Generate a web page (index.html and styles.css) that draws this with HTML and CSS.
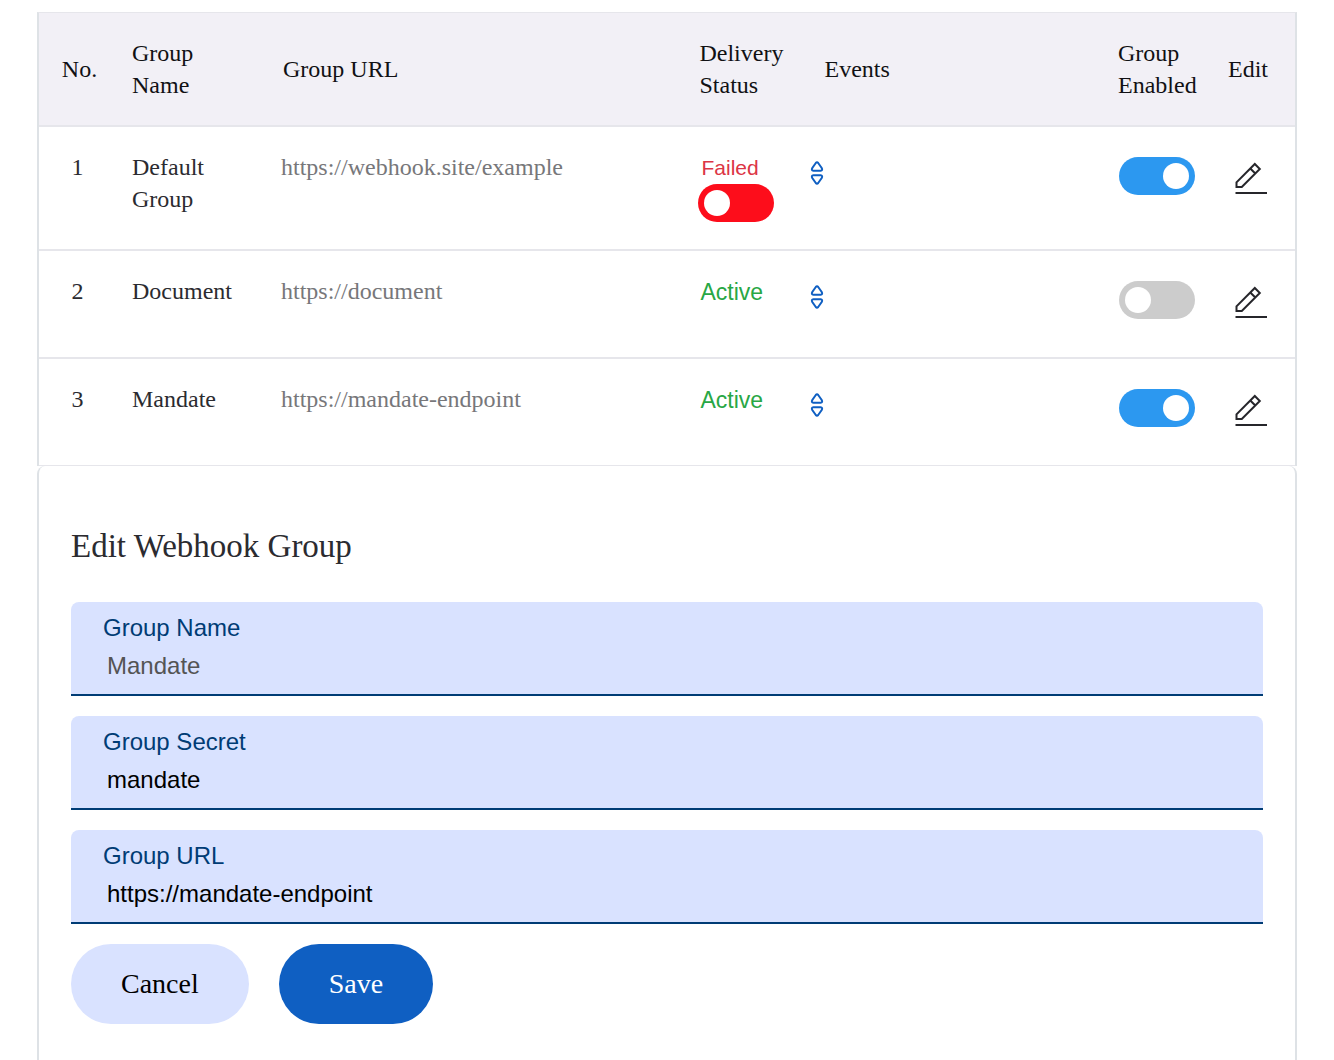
FILE: index.html
```html
<!DOCTYPE html>
<html lang="en">
<head>
  <meta charset="UTF-8" />
  <meta name="viewport" content="width=device-width, initial-scale=1.0"/>
  <title>Webhook Groups</title>
  <link rel="stylesheet" href="styles.css">
</head>
<body>
  <!-- Shared icons -->
  <svg class="sprite" aria-hidden="true">
    <symbol id="icon-sort" viewBox="0 0 14 26">
      <path d="M5.8 3 L2.3 8 Q1 10.6 3.4 10.8 H10.6 Q13 10.6 11.7 8 L8.2 3 Q7 1.6 5.8 3 Z"/>
      <path d="M5.8 23 L2.3 18 Q1 15.4 3.4 15.2 H10.6 Q13 15.4 11.7 18 L8.2 23 Q7 24.4 5.8 23 Z"/>
    </symbol>
    <symbol id="icon-edit" viewBox="0 0 40 36">
      <path d="M8.5 27 V22.3 L26.8 4 L31.8 9 L13.8 27 Z M22.3 8.5 L27.3 13.5 M7.5 33 H39"/>
    </symbol>
  </svg>

  <!-- Groups Table -->
  <table class="groups">
    <colgroup>
      <col class="col-no">
      <col class="col-name">
      <col class="col-url">
      <col class="col-status">
      <col class="col-events">
      <col class="col-enabled">
      <col class="col-edit">
    </colgroup>
    <thead>
      <tr>
        <th class="no">No.</th>
        <th class="name">Group Name</th>
        <th>Group URL</th>
        <th class="delivery">Delivery Status</th>
        <th class="events">Events</th>
        <th>Group Enabled</th>
        <th>Edit</th>
      </tr>
    </thead>
    <tbody>
      <tr>
        <td class="no">1</td>
        <td>Default Group</td>
        <td class="url">https://webhook.site/example</td>
        <td class="status">
          <label class="failed" for="retry-1">Failed</label>
          <input type="checkbox" id="retry-1" class="toggle toggle-failed">
        </td>
        <td><button type="button" class="icon-btn" aria-label="Show events"><svg class="icon-sort"><use href="#icon-sort"/></svg></button></td>
        <td><input type="checkbox" class="toggle toggle-enabled" aria-label="Default Group enabled" checked></td>
        <td><button type="button" class="icon-btn" aria-label="Edit Default Group"><svg class="icon-edit"><use href="#icon-edit"/></svg></button></td>
      </tr>
      <tr>
        <td class="no">2</td>
        <td>Document</td>
        <td class="url">https://document</td>
        <td class="status"><span class="active">Active</span></td>
        <td><button type="button" class="icon-btn" aria-label="Show events"><svg class="icon-sort"><use href="#icon-sort"/></svg></button></td>
        <td><input type="checkbox" class="toggle toggle-enabled" aria-label="Document enabled"></td>
        <td><button type="button" class="icon-btn" aria-label="Edit Document"><svg class="icon-edit"><use href="#icon-edit"/></svg></button></td>
      </tr>
      <tr>
        <td class="no">3</td>
        <td>Mandate</td>
        <td class="url">https://mandate-endpoint</td>
        <td class="status"><span class="active">Active</span></td>
        <td><button type="button" class="icon-btn" aria-label="Show events"><svg class="icon-sort"><use href="#icon-sort"/></svg></button></td>
        <td><input type="checkbox" class="toggle toggle-enabled" aria-label="Mandate enabled" checked></td>
        <td><button type="button" class="icon-btn" aria-label="Edit Mandate"><svg class="icon-edit"><use href="#icon-edit"/></svg></button></td>
      </tr>
    </tbody>
  </table>

  <!-- Edit Form -->
  <form class="edit-panel">
    <h2>Edit Webhook Group</h2>
    <div class="fields">
      <div class="field">
        <label for="group-name">Group Name</label>
        <input type="text" id="group-name" value="Mandate" disabled>
      </div>
      <div class="field">
        <label for="group-secret">Group Secret</label>
        <input type="text" id="group-secret" value="mandate">
      </div>
      <div class="field">
        <label for="group-url">Group URL</label>
        <input type="text" id="group-url" value="https://mandate-endpoint">
      </div>
    </div>
    <div class="buttons">
      <button type="button" class="btn btn-cancel">Cancel</button>
      <button type="submit" class="btn btn-save">Save</button>
    </div>
  </form>
</body>
</html>
```
FILE: styles.css
```css
* {
  margin: 0;
  padding: 0;
  box-sizing: border-box;
}

body {
  background-color: #fff;
  color: #2b2b30;
  font-family: "Liberation Serif", "Times New Roman", serif;
  font-size: 24px;
  line-height: 32px;
  min-height: 100vh;
  display: flex;
  flex-direction: column;
  padding: 12px 37px 0;
}

.sprite {
  position: absolute;
  width: 0;
  height: 0;
}

/* Groups table */
.groups {
  width: 100%;
  table-layout: fixed;
  border-collapse: separate;
  border-spacing: 0;
  border: 2px solid #dee2e6;
  border-top: 1px solid #e6e6eb;
  border-bottom: none;
}

.col-no {
  width: 81px;
}

.col-name {
  width: 151px;
}

.col-url {
  width: 33%;
}

.col-status {
  width: 113px;
}

.col-enabled {
  width: 110px;
}

.col-edit {
  width: 79px;
}

.groups th {
  height: 114px;
  background-color: #f2f0f6;
  color: #111114;
  font-weight: normal;
  text-align: left;
  vertical-align: middle;
  padding: 24px 12px;
  border-bottom: 2px solid #e6e6eb;
}

.groups th.name {
  padding-right: 32px;
}

.groups th.delivery {
  padding-left: 14px;
}

.groups th.events {
  padding-left: 26px;
}

.groups td {
  height: 108px;
  vertical-align: top;
  padding: 24px 12px 26px;
  border-bottom: 2px solid #e6e6eb;
}

.groups tr:first-child td {
  height: 124px;
}

.groups tr:last-child td {
  height: 107px;
  border-bottom-width: 1px;
}

.groups .no {
  text-align: center;
  padding-left: 8px;
}

.groups th.no {
  padding-left: 12px;
}

.groups .url {
  color: #77777a;
  padding-left: 10px;
}

.groups .status {
  font-family: "Liberation Sans", Arial, sans-serif;
  padding-top: 25px;
  padding-left: 13px;
}

.failed {
  display: block;
  font-size: 21px;
  color: #dc3545;
  padding-left: 3px;
}

.active {
  display: block;
  font-size: 23px;
  color: #28a745;
  padding-left: 2px;
}

/* Toggle switch */
.toggle {
  appearance: none;
  display: flex;
  align-items: center;
  width: 76px;
  height: 38px;
  padding: 6px;
  border-radius: 19px;
  background-color: #ccc;
  cursor: pointer;
}

.toggle::before {
  content: "";
  width: 26px;
  height: 26px;
  border-radius: 50%;
  background-color: #fff;
}

.toggle:checked {
  justify-content: flex-end;
  background-color: #2c98f0;
}

.toggle-enabled {
  margin: 6px 0 0 1px;
}

.toggle-failed {
  background-color: #fd0d1b;
}

.icon-btn {
  display: block;
  margin-top: 9px;
  border: none;
  background: none;
  cursor: pointer;
}

.icon-btn svg {
  display: block;
  fill: none;
  stroke-width: 2px;
}

.icon-sort {
  width: 14px;
  height: 26px;
  stroke: #0f5fc2;
}

.icon-edit {
  width: 40px;
  height: 36px;
  stroke: #26262b;
}

/* Edit form */
.edit-panel {
  flex: 1;
  border: 2px solid #dee2e6;
  border-top: none;
  border-bottom: none;
  border-radius: 8px 8px 0 0;
  padding: 60px 32px 36px;
}

.edit-panel h2 {
  font-size: 33px;
  font-weight: normal;
  line-height: 40px;
  margin-bottom: 36px;
}

.fields {
  display: flex;
  flex-direction: column;
  gap: 20px;
}

.field {
  display: flex;
  flex-direction: column;
  gap: 6px;
  padding: 10px 32px 12px;
  background-color: #d9e2ff;
  border-bottom: 2px solid #003c75;
  border-radius: 8px 8px 0 0;
  font-family: "Liberation Sans", Arial, sans-serif;
}

.field label {
  color: #003c75;
}

.field input {
  width: 100%;
  height: 32px;
  padding: 0 4px;
  border: none;
  outline: none;
  background: none;
  color: #000;
  font: inherit;
}

.field input:disabled {
  color: #545454;
}

.buttons {
  display: flex;
  gap: 30px;
  margin-top: 20px;
}

.btn {
  height: 80px;
  padding: 0 50px;
  border: none;
  border-radius: 40px;
  font-family: inherit;
  font-size: 28px;
  cursor: pointer;
}

.btn-cancel {
  background-color: #d9e2ff;
  color: #000;
}

.btn-save {
  background-color: #0f5fc2;
  color: #fff;
}
```
